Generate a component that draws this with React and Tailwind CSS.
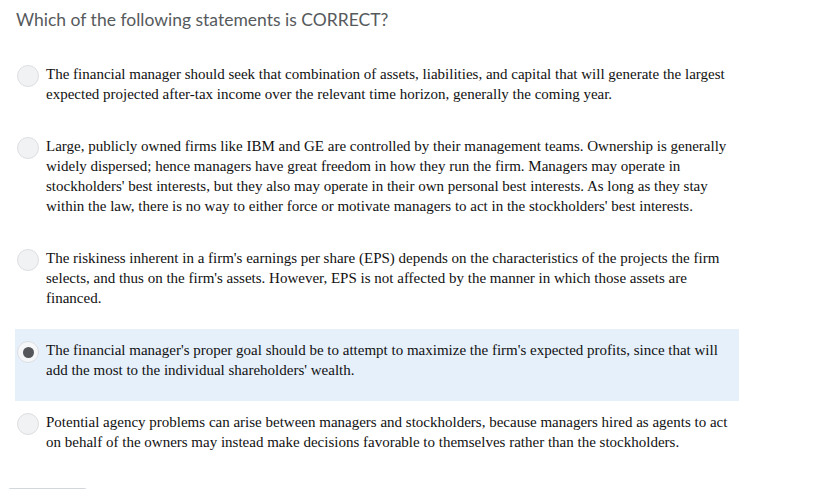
const options = [
  {
    text: 'The financial manager should seek that combination of assets, liabilities, and capital that will generate the largest expected projected after-tax income over the relevant time horizon, generally the coming year.',
  },
  {
    text: "Large, publicly owned firms like IBM and GE are controlled by their management teams. Ownership is generally widely dispersed; hence managers have great freedom in how they run the firm. Managers may operate in stockholders' best interests, but they also may operate in their own personal best interests. As long as they stay within the law, there is no way to either force or motivate managers to act in the stockholders' best interests.",
  },
  {
    text: "The riskiness inherent in a firm's earnings per share (EPS) depends on the characteristics of the projects the firm selects, and thus on the firm's assets. However, EPS is not affected by the manner in which those assets are financed.",
  },
  {
    text: "The financial manager's proper goal should be to attempt to maximize the firm's expected profits, since that will add the most to the individual shareholders' wealth.",
    selected: true,
  },
  {
    text: 'Potential agency problems can arise between managers and stockholders, because managers hired as agents to act on behalf of the owners may instead make decisions favorable to themselves rather than the stockholders.',
  },
]

function Radio({ checked }) {
  return (
    <span
      className={
        'mt-[1px] flex h-[22px] w-[22px] shrink-0 items-center justify-center rounded-full border ' +
        (checked ? 'border-[#dcdee2] bg-[#f6f7f8]' : 'border-[#dcdee2] bg-[#f1f2f4]')
      }
    >
      {checked && <span className="h-[11px] w-[11px] rounded-full bg-[#545659]" />}
    </span>
  )
}

export default function App() {
  return (
    <div className="h-[489px] w-[820px] overflow-hidden bg-white">
      <h1 className="pl-[16px] pt-[10px] font-['Lato',sans-serif] text-[17.5px] leading-[20px] text-[#565a5c]">
        Which of the following statements is CORRECT?
      </h1>

      <div className="mt-[23px] ml-[15px] w-[724px]">
        {options.map((o, i) => (
          <label
            key={i}
            className={
              'flex gap-[7px] pl-[2px] pt-[11px] pb-[21px] ' +
              (o.selected ? 'bg-[#e6f0fb]' : '')
            }
          >
            <Radio checked={o.selected} />
            <p className="font-['Liberation_Serif',serif] text-[15px] leading-[20px] text-[#111]">
              {o.text}
            </p>
          </label>
        ))}
      </div>

      <div className="ml-[8px] mt-[15px] h-[10px] w-[79px] rounded-t-[3px] border-t border-[#d3d6db]" />
    </div>
  )
}
